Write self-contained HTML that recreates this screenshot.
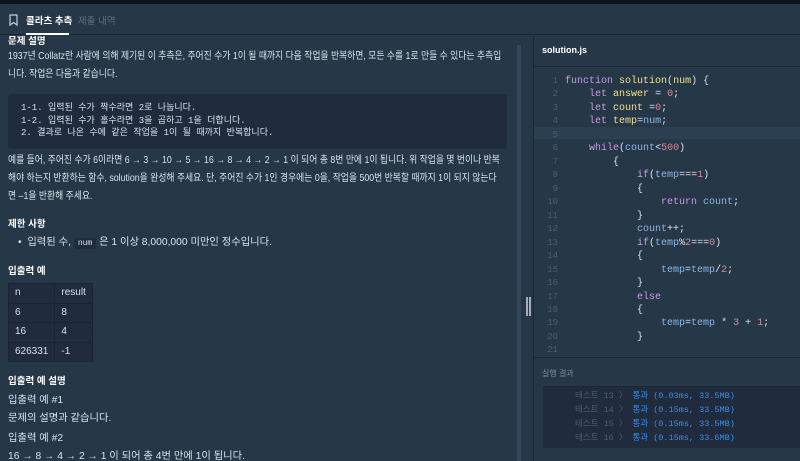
<!DOCTYPE html>
<html><head><meta charset="utf-8"><style>
*{margin:0;padding:0;box-sizing:border-box}
body{width:800px;height:461px;overflow:hidden;background:#263747;font-family:"Liberation Sans","Noto Sans CJK KR",sans-serif;color:#d7e2eb;position:relative}
.top{position:absolute;left:0;top:0;width:800px;height:4px;background:#0c151c}
.hdr{position:absolute;left:0;top:4px;width:800px;height:31px;background:#263747;border-bottom:1px solid #1a2634}
.tab{position:absolute;top:9px;font-size:9.5px;font-weight:bold;color:#fff;white-space:nowrap}
.left{position:absolute;left:0;top:36px;width:517px;height:425px;font-size:10.3px;line-height:18px;overflow:hidden}
.p{position:absolute;left:8px;color:#d7e2eb}
.w{white-space:nowrap;transform:scaleX(0.855);transform-origin:0 0}
h4{position:absolute;left:8px;font-size:9.5px;font-weight:bold;color:#fff}
.code{position:absolute;left:8px;top:94px;width:499px;height:55px;background:#202b3d;border-radius:3px;font-family:"Liberation Mono","Noto Sans CJK KR",monospace;font-size:9px;line-height:12.5px;padding:8px 13px;color:#d7e2eb}
table{position:absolute;left:8px;top:283px;border-collapse:collapse;background:#202b3d;font-size:10px}
td{border:1px solid #1a2432;height:19.5px;padding:0 6px;color:#d7e2eb}
.sb{position:absolute;left:517px;top:45px;width:4px;height:416px;background:#34465a}
.sep{position:absolute;left:533px;top:36px;width:1px;height:425px;background:#1b2735}
.grip{position:absolute;left:526px;top:297px;width:5px;height:19px;border-left:2px solid #aab;border-right:2px solid #aab}
.right{position:absolute;left:534px;top:36px;width:266px;height:425px;overflow:hidden}
.fn{position:absolute;left:8px;top:9px;font-size:9px;font-weight:bold;color:#fff}
.rline{position:absolute;left:0;top:30px;width:266px;height:1px;background:#1b2735}
.ed{position:absolute;left:0;top:39px;font-family:"Liberation Mono",monospace;font-size:10px;line-height:12.47px;white-space:pre;color:#d7e2eb}
.ln{display:inline-block;width:24px;text-align:right;color:#4d5e70;margin-right:7px;font-size:9px}
.k{color:#c99be0}.v{color:#f0e08a}.n{color:#d58a9a}.b{color:#8ab8e6}
.hl{position:absolute;left:0;top:91px;width:266px;height:12px;background:#2c3e52}
.res{position:absolute;left:0;top:321px;width:266px;height:104px;background:#263747;border-top:1px solid #1b2735}
.rt{position:absolute;left:8px;top:10px;font-size:8px;color:#7d8c9c}
.rbox{position:absolute;left:9px;top:28px;width:257px;height:62px;background:#202b3d;font-family:"Liberation Mono","Noto Sans CJK KR",monospace;font-size:8.5px;line-height:14px;padding:2px 0 0 32px;color:#4f5f70;border-top:1px solid #1b2735}
.ok{color:#3b8de8}
</style></head><body>
<div class="top"></div>
<div class="hdr">
<svg style="position:absolute;left:9px;top:10px" width="9" height="12" viewBox="0 0 9 12"><path d="M1 1h7v10l-3.5-2.5L1 11z" fill="none" stroke="#c6d0da" stroke-width="1.2"/></svg>
<span class="tab" style="left:26px">콜라츠 추측</span>
<span class="tab" style="left:78px;color:#5d6f80;font-weight:normal">제출 내역</span>
<div style="position:absolute;left:26px;top:29px;width:43px;height:2px;background:#fff"></div>
</div>
<div class="left">
<h4 style="top:-3px">문제 설명</h4>
<div class="p w" style="top:12px">1937년 Collatz란 사람에 의해 제기된 이 추측은, 주어진 수가 1이 될 때까지 다음 작업을 반복하면, 모든 수를 1로 만들 수 있다는 추측입<br>니다. 작업은 다음과 같습니다.</div>
<div class="code" style="top:58px">1-1. 입력된 수가 짝수라면 2로 나눕니다.<br>1-2. 입력된 수가 홀수라면 3을 곱하고 1을 더합니다.<br>2. 결과로 나온 수에 같은 작업을 1이 될 때까지 반복합니다.</div>
<div class="p w" style="top:116px">예를 들어, 주어진 수가 6이라면 6 → 3 → 10 → 5 → 16 → 8 → 4 → 2 → 1 이 되어 총 8번 만에 1이 됩니다. 위 작업을 몇 번이나 반복<br>해야 하는지 반환하는 함수, solution을 완성해 주세요. 단, 주어진 수가 1인 경우에는 0을, 작업을 500번 반복할 때까지 1이 되지 않는다<br>면 –1을 반환해 주세요.</div>
<h4 style="top:180px">제한 사항</h4>
<div class="p" style="top:198px;left:18px">• &nbsp;입력된 수, <span style="background:#202b3d;font-family:'Liberation Mono';font-size:8px;padding:1px 4px;border-radius:2px">num</span> 은 1 이상 8,000,000 미만인 정수입니다.</div>
<h4 style="top:227px">입출력 예</h4>
<table style="top:247px"><tr><td style="width:46px">n</td><td style="width:37px">result</td></tr><tr><td>6</td><td>8</td></tr><tr><td>16</td><td>4</td></tr><tr><td>626331</td><td>-1</td></tr></table>
<h4 style="top:337px">입출력 예 설명</h4>
<div class="p" style="top:356px">입출력 예 #1<br>문제의 설명과 같습니다.</div>
<div class="p" style="top:394px">입출력 예 #2<br>16 → 8 → 4 → 2 → 1 이 되어 총 4번 만에 1이 됩니다.</div>
</div>
<div class="sb"></div><div class="sep"></div><div class="grip"></div>
<div class="right">
<div class="fn">solution.js</div>
<div class="rline"></div>
<div class="hl"></div>
<div class="ed"><span class="ln">1</span><span class="k">function</span> <span class="v">solution</span>(<span class="v">num</span>) {
<span class="ln">2</span>    <span class="k">let</span> <span class="v">answer</span> = <span class="n">0</span>;
<span class="ln">3</span>    <span class="k">let</span> <span class="v">count</span> =<span class="n">0</span>;
<span class="ln">4</span>    <span class="k">let</span> <span class="v">temp</span>=<span class="b">num</span>;
<span class="ln">5</span>
<span class="ln">6</span>    <span class="k">while</span>(<span class="b">count</span>&lt;<span class="n">500</span>)
<span class="ln">7</span>        {
<span class="ln">8</span>            <span class="k">if</span>(<span class="b">temp</span>===<span class="n">1</span>)
<span class="ln">9</span>            {
<span class="ln">10</span>                <span class="k">return</span> <span class="b">count</span>;
<span class="ln">11</span>            }
<span class="ln">12</span>            <span class="b">count</span>++;
<span class="ln">13</span>            <span class="k">if</span>(<span class="b">temp</span>%<span class="n">2</span>===<span class="n">0</span>)
<span class="ln">14</span>            {
<span class="ln">15</span>                <span class="b">temp</span>=<span class="b">temp</span>/<span class="n">2</span>;
<span class="ln">16</span>            }
<span class="ln">17</span>            <span class="k">else</span>
<span class="ln">18</span>            {
<span class="ln">19</span>                <span class="b">temp</span>=<span class="b">temp</span> * <span class="n">3</span> + <span class="n">1</span>;
<span class="ln">20</span>            }
<span class="ln">21</span>
<span class="ln">22</span>
<span class="ln">23</span>        }</div>
<div class="res">
<div class="rt">실행 결과</div>
<div class="rbox">테스트 13 〉 <span class="ok">통과 (0.03ms, 33.5MB)</span><br>테스트 14 〉 <span class="ok">통과 (0.15ms, 33.5MB)</span><br>테스트 15 〉 <span class="ok">통과 (0.15ms, 33.5MB)</span><br>테스트 16 〉 <span class="ok">통과 (0.15ms, 33.6MB)</span></div>
</div>
</div>
</body></html>
